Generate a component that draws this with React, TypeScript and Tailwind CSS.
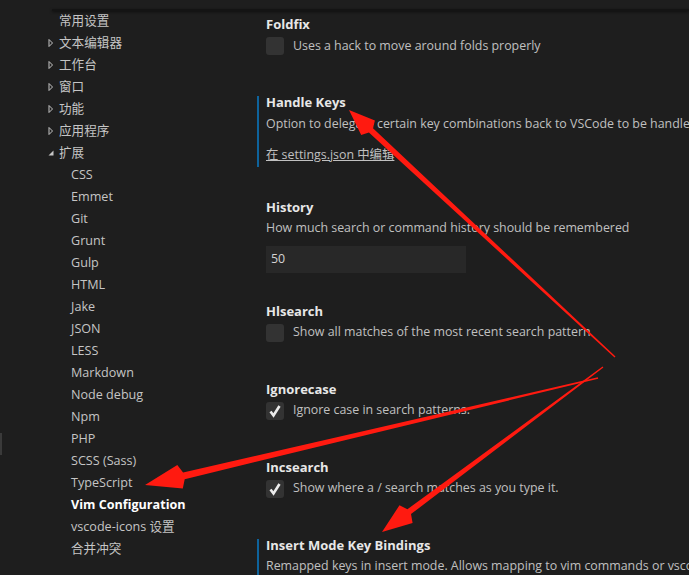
import React from "react"

const font = { fontFamily: '"Open Sans", "Noto Sans CJK SC", sans-serif' }

type Node = { label: string; arrow?: "right" | "down"; child?: boolean; active?: boolean }

const tree: Node[] = [
  { label: "常用设置" },
  { label: "文本编辑器", arrow: "right" },
  { label: "工作台", arrow: "right" },
  { label: "窗口", arrow: "right" },
  { label: "功能", arrow: "right" },
  { label: "应用程序", arrow: "right" },
  { label: "扩展", arrow: "down" },
  ...["CSS", "Emmet", "Git", "Grunt", "Gulp", "HTML", "Jake", "JSON", "LESS", "Markdown", "Node debug", "Npm", "PHP", "SCSS (Sass)", "TypeScript"].map(
    (l) => ({ label: l, child: true })
  ),
  { label: "Vim Configuration", child: true, active: true },
  { label: "vscode-icons 设置", child: true },
  { label: "合并冲突", child: true },
]

function Tri({ dir }: { dir: "right" | "down" }) {
  if (dir === "right")
    return (
      <svg width="6" height="10" viewBox="0 0 6 10" className="mr-[5px]">
        <path d="M1 1.5 L4.5 5 L1 8.5 Z" fill="none" stroke="#c5c5c5" strokeWidth="1" />
      </svg>
    )
  return (
    <svg width="6" height="10" viewBox="0 0 6 10" className="mr-[5px]">
      <path d="M0.5 7.5 L5.5 7.5 L5.5 2.5 Z" fill="#c5c5c5" />
    </svg>
  )
}

function Check({ on }: { on?: boolean }) {
  return (
    <div className="w-[18px] h-[18px] rounded-[3px] bg-[#333333] flex items-center justify-center shrink-0">
      {on && (
        <svg width="14" height="14" viewBox="0 0 14 14">
          <path d="M2.5 7.5 L5.5 11.5 L11.5 2" fill="none" stroke="#ececec" strokeWidth="2.6" />
        </svg>
      )}
    </div>
  )
}

function Title({ children, tight }: { children: React.ReactNode; tight?: boolean }) {
  return (
    <div className={`text-[13px] font-bold text-[#e7e7e7] whitespace-nowrap ${tight ? "leading-[12px]" : "leading-[20px]"}`}>
      {children}
    </div>
  )
}

function Desc({ children, className = "" }: { children: React.ReactNode; className?: string }) {
  return <div className={`text-[12.4px] leading-[21px] text-[#c0c0c0] whitespace-nowrap ${className}`}>{children}</div>
}

function BoolSetting({ title, desc, on }: { title: string; desc: string; on?: boolean }) {
  return (
    <div className="pl-[26px]">
      <Title>{title}</Title>
      <div className="flex items-center gap-[9px] mt-[3px] h-[18px]">
        <Check on={on} />
        <span className="text-[12.4px] text-[#c0c0c0] whitespace-nowrap">{desc}</span>
      </div>
    </div>
  )
}

function arrow(x1: number, y1: number, x2: number, y2: number, w0: number, w1: number, hl: number, hw: number) {
  const dx = x2 - x1
  const dy = y2 - y1
  const len = Math.hypot(dx, dy)
  const ux = dx / len
  const uy = dy / len
  const nx = -uy
  const ny = ux
  const bx = x2 - ux * hl
  const by = y2 - uy * hl
  const p = [
    [x1 + (nx * w0) / 2, y1 + (ny * w0) / 2],
    [bx + (nx * w1) / 2, by + (ny * w1) / 2],
    [bx - ux * -4 + nx * hw, by - uy * -4 + ny * hw],
    [x2, y2],
    [bx - ux * -4 - nx * hw, by - uy * -4 - ny * hw],
    [bx - (nx * w1) / 2, by - (ny * w1) / 2],
    [x1 - (nx * w0) / 2, y1 - (ny * w0) / 2],
  ]
  return p.map((q) => q.map((v) => v.toFixed(1)).join(",")).join(" ")
}

export default function App() {
  return (
    <div className="relative w-[689px] h-[575px] overflow-hidden bg-[#1e1e1e]" style={font}>
      <div className="absolute left-0 top-[433px] w-[2px] h-[22px] bg-[#3a3a3a]" />
      <div className="flex h-full">
        {/* sidebar */}
        <div className="w-[240px] shrink-0 pt-[10px]">
          {tree.map((n) => (
            <div
              key={n.label}
              className={`h-[22px] flex items-center text-[12.6px] whitespace-nowrap ${n.child ? "pl-[71px]" : n.arrow ? "pl-[48px]" : "pl-[59px]"} ${
                n.active ? "font-bold text-white" : "text-[#c5c5c5]"
              }`}
            >
              {n.arrow && <Tri dir={n.arrow} />}
              {n.label}
            </div>
          ))}
        </div>

        {/* content */}
        <div className="flex-1 flex flex-col pt-[14px]">
          <BoolSetting title="Foldfix" desc="Uses a hack to move around folds properly" />

          <div className="mt-[41px] ml-[17px] border-l-2 border-[#0e639c] pl-[7px] pb-[2px]">
            <Title tight>Handle Keys</Title>
            <Desc className="mt-[4.5px]">Option to delegate certain key combinations back to VSCode to be handled natively</Desc>
            <Desc className="mt-[10px] underline">在 settings.json 中编辑</Desc>
          </div>

          <div className="pl-[26px] mt-[30px]">
            <Title>History</Title>
            <Desc className="mt-[0.5px]">How much search or command history should be remembered</Desc>
            <div className="mt-[7.5px] w-[200px] h-[27px] bg-[#282828] flex items-center pl-[5px] text-[12.4px] text-[#d4d4d4]">50</div>
          </div>

          <div className="mt-[28px]">
            <BoolSetting title="Hlsearch" desc="Show all matches of the most recent search pattern" />
          </div>
          <div className="mt-[37px]">
            <BoolSetting title="Ignorecase" desc="Ignore case in search patterns." on />
          </div>
          <div className="mt-[37px]">
            <BoolSetting title="Incsearch" desc="Show where a / search matches as you type it." on />
          </div>

          <div className="mt-[41px] ml-[17px] border-l-2 border-[#0e639c] pl-[7px] h-[60px]">
            <Title tight>Insert Mode Key Bindings</Title>
            <Desc className="mt-[4.5px]">Remapped keys in insert mode. Allows mapping to vim commands or vscode actions</Desc>
          </div>
        </div>
      </div>

      {/* top shadow line */}
      <div className="absolute left-[52px] right-0 top-[9px] h-[2px] bg-[#141414] shadow-[0_1px_3px_rgba(0,0,0,0.6)]" />

      {/* red annotation arrows */}
      <svg className="absolute inset-0 pointer-events-none" width="689" height="575">
        <polygon points={arrow(615, 357, 349, 110, 1.5, 6, 30, 10)} fill="#ff1a10" />
        <polygon points={arrow(598, 378, 145, 485, 1.5, 7, 40, 12)} fill="#ff1a10" />
        <polygon points={arrow(603, 367, 382, 532, 1.5, 6, 34, 11)} fill="#ff1a10" />
      </svg>
    </div>
  )
}
